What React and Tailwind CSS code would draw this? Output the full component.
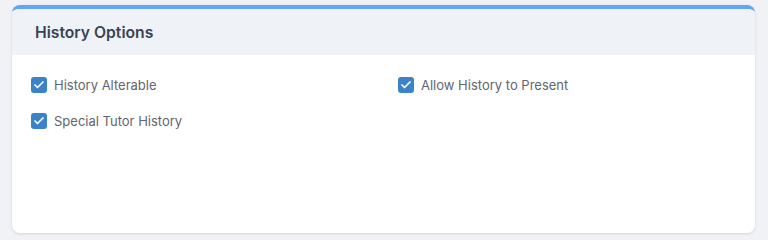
import { Check } from 'lucide-react';

const options = [
  'History Alterable',
  'Allow History to Present',
  'Special Tutor History',
];

const Option = ({ label }) => (
  <label className="flex items-center gap-[7px] h-4">
    <span className="w-4 h-4 rounded-[3px] bg-[#3b82c8] flex items-center justify-center">
      <Check className="w-3 h-3 text-white" strokeWidth={3.5} />
    </span>
    <span className="text-[13px] text-[#5f6572] font-normal leading-none">{label}</span>
  </label>
);

const App = () => {
  return (
    <div className="w-[768px] h-[240px] bg-[#f1f2f6] pt-[5px] px-3 font-['Inter',sans-serif]">
      <div className="w-[743px] h-[228px] bg-white rounded-lg border-t-4 border-[#60a5fa] shadow-[0_1px_3px_rgba(0,0,0,0.12)] overflow-hidden">
        <div className="h-[46px] bg-[#eff3f8] flex items-center px-[23px] pt-[1px]">
          <h2 className="text-[15.7px] font-semibold text-[#3a4352]">History Options</h2>
        </div>
        <div className="grid grid-cols-[367px_1fr] gap-y-5 pt-[22px] pl-[19px]">
          {options.map((o) => (
            <Option key={o} label={o} />
          ))}
        </div>
      </div>
    </div>
  );
};

export default App;
